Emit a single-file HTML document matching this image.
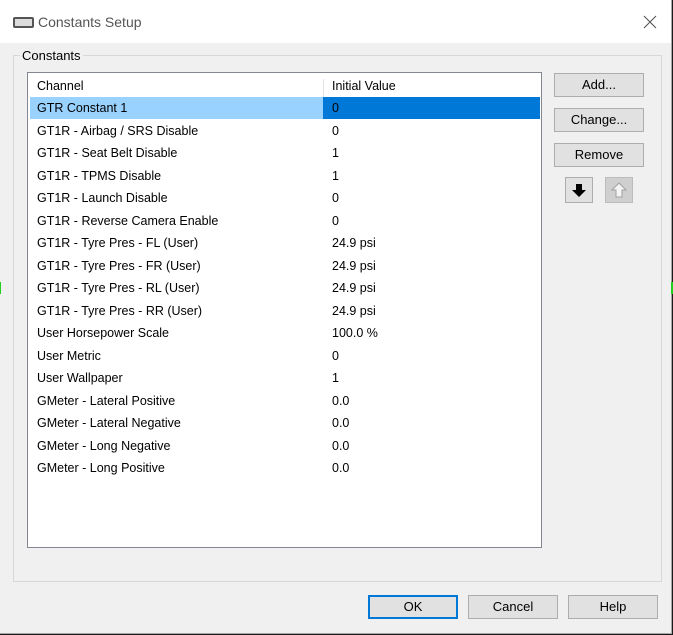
<!DOCTYPE html>
<html><head><style>
body{margin:0;width:673px;height:635px;background:#1a1a1a;position:relative;overflow:hidden;font-family:"Liberation Sans",sans-serif;font-size:12.5px;color:#000}
.win{position:absolute;left:-1px;top:-1px;width:671px;height:633px;background:#f0f0f0;border:1px solid #a8a8a8;}
.title{position:absolute;left:0;top:0;width:671px;height:43px;background:#fff}
.title span{position:absolute;left:38px;top:14px;font-size:14px;color:#555}
.icon{position:absolute;left:13px;top:17px;width:17px;height:7px;background:#ddd;border:2px solid #555;border-radius:2px}
.x{position:absolute;left:643px;top:15px}
.grp{position:absolute;left:13px;top:55px;width:647px;height:525px;border:1px solid #d8d8d8}
.glbl{position:absolute;left:20px;top:48px;background:#f0f0f0;padding:0 2px;font-size:13px}
.list{position:absolute;left:27px;top:72px;width:513px;height:474px;background:#fff;border:1px solid #828790}
.hdr{position:absolute;left:0;top:0;width:513px;height:24px}
.hdr div{position:absolute;top:6px}
.sep{position:absolute;left:295px;top:0;width:1px;height:23px;background:#e5e5e5}
.row{position:absolute;left:2px;width:511px;height:22px}
.row .a{position:absolute;left:7px;top:4px}
.row .b{position:absolute;left:302px;top:4px}
.sel .ca{position:absolute;left:0;top:0;width:293px;height:22px;background:#99d1ff}
.sel .cb{position:absolute;left:293px;top:0;width:217px;height:22px;background:#0078d7}
.btn{position:absolute;width:88px;height:22px;background:#e1e1e1;border:1px solid #adadad;text-align:center;line-height:22px;font-size:13px}
.ok{border:2px solid #0078d7;width:86px;height:20px;line-height:20px}
.ab{position:absolute;width:26px;height:24px;border:1px solid #adadad;background:#e1e1e1}
</style></head><body>
<div class="win">
<div class="title"><div class="icon"></div><span>Constants Setup</span>
<svg class="x" width="14" height="14"><path d="M1 1L13 13M13 1L1 13" stroke="#555" stroke-width="1.1"/></svg></div>
<div class="grp"></div>
<div class="glbl">Constants</div>
<div class="list">
<div class="hdr"><div style="left:9px">Channel</div><div class="sep"></div><div style="left:304px">Initial Value</div></div>
<div class="row sel" style="top:24px"><div class="ca"></div><div class="cb"></div><div class="a">GTR Constant 1</div><div class="b">0</div></div>
<div class="row" style="top:46.5px"><div class="a">GT1R - Airbag / SRS Disable</div><div class="b">0</div></div>
<div class="row" style="top:69px"><div class="a">GT1R - Seat Belt Disable</div><div class="b">1</div></div>
<div class="row" style="top:91.5px"><div class="a">GT1R - TPMS Disable</div><div class="b">1</div></div>
<div class="row" style="top:114px"><div class="a">GT1R - Launch Disable</div><div class="b">0</div></div>
<div class="row" style="top:136.5px"><div class="a">GT1R - Reverse Camera Enable</div><div class="b">0</div></div>
<div class="row" style="top:159px"><div class="a">GT1R - Tyre Pres - FL (User)</div><div class="b">24.9 psi</div></div>
<div class="row" style="top:181.5px"><div class="a">GT1R - Tyre Pres - FR (User)</div><div class="b">24.9 psi</div></div>
<div class="row" style="top:204px"><div class="a">GT1R - Tyre Pres - RL (User)</div><div class="b">24.9 psi</div></div>
<div class="row" style="top:226.5px"><div class="a">GT1R - Tyre Pres - RR (User)</div><div class="b">24.9 psi</div></div>
<div class="row" style="top:249px"><div class="a">User Horsepower Scale</div><div class="b">100.0 %</div></div>
<div class="row" style="top:271.5px"><div class="a">User Metric</div><div class="b">0</div></div>
<div class="row" style="top:294px"><div class="a">User Wallpaper</div><div class="b">1</div></div>
<div class="row" style="top:316.5px"><div class="a">GMeter - Lateral Positive</div><div class="b">0.0</div></div>
<div class="row" style="top:339px"><div class="a">GMeter - Lateral Negative</div><div class="b">0.0</div></div>
<div class="row" style="top:361.5px"><div class="a">GMeter - Long Negative</div><div class="b">0.0</div></div>
<div class="row" style="top:384px"><div class="a">GMeter - Long Positive</div><div class="b">0.0</div></div>
</div>
<div class="btn" style="left:554px;top:73px">Add...</div>
<div class="btn" style="left:554px;top:108px">Change...</div>
<div class="btn" style="left:554px;top:143px">Remove</div>
<div class="ab" style="left:565px;top:177px"><svg width="26" height="24"><path d="M10 6h6v6h4l-7 7-7-7h4z" fill="#000"/></svg></div>
<div class="ab" style="left:605px;top:177px;background:#cfcfcf;border-color:#bcbcbc"><svg width="26" height="24"><path d="M10 19h6v-7h4l-7-7-7 7h4z" fill="#f4f4f4" stroke="#a0a0a0"/></svg></div>
<div class="btn ok" style="left:368px;top:595px">OK</div>
<div class="btn" style="left:468px;top:595px">Cancel</div>
<div class="btn" style="left:568px;top:595px">Help</div>
</div>
<div style="position:absolute;left:671px;top:282px;width:2px;height:12px;background:#1fd01f"></div>
<div style="position:absolute;left:0;top:282px;width:1px;height:12px;background:#1fd01f"></div>
</body></html>
